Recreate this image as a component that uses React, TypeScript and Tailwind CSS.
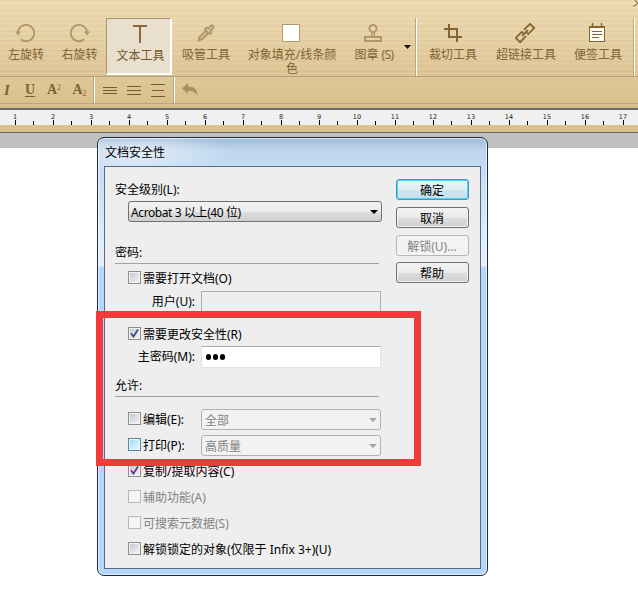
import React from 'react';
import clsx from 'clsx';
import { Pipette } from 'lucide-react';

const ICON = '#b0966a';
const DARK = '#84652f';

const RotateIcon = ({ flip }: { flip?: boolean }) => (
    <svg
        width="20"
        height="20"
        viewBox="0 0 20 20"
        fill="none"
        stroke={ICON}
        strokeWidth="1.8"
        className={clsx(flip ? '-scale-x-100' : 'mr-[3px]')}
    >
        <path d="M5.7 16.3A8.2 8.2 0 1 0 2.8 10" />
        <path d="M0 8.5h6L3 12.500z" fill={ICON} stroke="none" />
    </svg>
);

const TextIcon = () => (
    <svg width="20" height="20" viewBox="0 0 20 20" fill="#86683a" className="mr-[2px]">
        <rect x="3" y="1" width="14" height="2" />
        <rect x="9" y="1" width="2" height="18" />
    </svg>
);

const FillIcon = () => (
    <div className="mr-[2px] h-[18px] w-[18px] border border-[#b39a6a] bg-white" />
);

const StampIcon = () => (
    <svg
        width="20"
        height="20"
        viewBox="0 0 20 20"
        fill="none"
        stroke={ICON}
        strokeWidth="2"
        className="mr-[2px]"
    >
        <circle cx="10" cy="5.500" r="3.600" />
        <path d="M8.700 9v4.500M11.300 9v4.500" strokeWidth="1.500" />
        <rect x="2" y="14" width="16" height="4" />
    </svg>
);

const CropIcon = () => (
    <svg
        width="20"
        height="20"
        viewBox="0 0 20 20"
        fill="none"
        stroke={DARK}
        strokeWidth="2"
    >
        <path d="M6 1v13h13M1 6h13v13" />
    </svg>
);

const LinkIcon = () => (
    <svg
        width="20"
        height="20"
        viewBox="0 0 20 20"
        fill="none"
        stroke={DARK}
        strokeWidth="1.800"
        className="mr-[2px]"
    >
        <g transform="rotate(-45 10 10)">
            <path d="M8.500 13H0V7h8.500v2M11.500 7H20v6h-8.500v-2M6 10h8" />
        </g>
    </svg>
);

const NoteIcon = () => (
    <svg width="18" height="20" viewBox="0 0 18 20" fill="none" stroke={DARK} className="mr-[2px]">
        <rect x="1.500" y="3.500" width="15" height="15" fill="#fffdf6" />
        <path d="M1 4h16" strokeWidth="2" />
        <path d="M4.500 0v5M13.500 0v5" strokeWidth="1.500" />
        <path d="M4 8.500h10M4 11.500h10M4 14.500h7" />
    </svg>
);

interface ToolProps {
    icon: React.ReactNode;
    label: React.ReactNode;
    className: string;
}

const Tool = ({ icon, label, className }: ToolProps) => (
    <div className={clsx('flex shrink-0 flex-col items-center', className)}>
        <div className="flex h-5 items-center">{icon}</div>
        <div className="mt-[5px] text-center leading-[14px] whitespace-nowrap">
            {label}
        </div>
    </div>
);

const Separator = () => (
    <div className="w-[2px] shrink-0 self-stretch border-l border-[#bda77c] bg-white" />
);

const Lines = ({ gap, inset = 0 }: { gap: number; inset?: number }) => (
    <svg
        width="14"
        height="16"
        viewBox="0 0 14 16"
        stroke="#6f5b35"
        strokeWidth="1"
    >
        <path
            d={`M0 ${8.5 - gap}h14M${inset} 8.5H${14 - inset}M0 ${8.5 + gap}h14`}
        />
    </svg>
);

const Toolbar = () => (
    <div className="relative flex h-[77px] items-start overflow-hidden border-b border-[#b5a07c] bg-[repeating-linear-gradient(180deg,rgba(160,120,50,0.06)_0_2px,transparent_2px_5px),linear-gradient(180deg,#efddb8,#dec697)] pt-[18px] text-[#806331]">
        <Tool className="w-[52px] pt-[5px]" icon={<RotateIcon />} label="左旋转" />
        <Tool className="w-[54px] pt-[5px] pl-px" icon={<RotateIcon flip />} label="右旋转" />
        <Tool
            className="h-[57px] w-[66px] border border-r-2 border-b-2 border-[#a9946c] border-r-white border-b-white bg-[#e8dfcd] pt-[5px] pl-[4px] text-[#75582b]"
            icon={<TextIcon />}
            label="文本工具"
        />
        <Tool
            className="w-[68px] pt-[5px]"
            icon={<Pipette size={18} color={ICON} strokeWidth={2.6} />}
            label="吸管工具"
        />
        <Tool
            className="w-[104px] pt-[5px]"
            icon={<FillIcon />}
            label={
                <>
                    <div>对象填充/线条颜</div>
                    <div>色</div>
                </>
            }
        />
        <Tool
            className="w-[60px] pt-[5px]"
            icon={<StampIcon />}
            label={
                <>
                    图章 <span className="tracking-[-0.6px]">(S)</span>
                </>
            }
        />
        <svg width="7" height="4" viewBox="0 0 7 4" className="mt-[27px] mr-1 shrink-0">
            <path d="M0 0h7L3.500 4z" fill="#111" />
        </svg>
        <Separator />
        <Tool className="w-[72px] pt-[5px]" icon={<CropIcon />} label="裁切工具" />
        <Tool className="w-[74px] pt-[5px]" icon={<LinkIcon />} label="超链接工具" />
        <Tool className="w-[70px] pt-[5px]" icon={<NoteIcon />} label="便签工具" />
        <Separator />
        {/* next toolbar caption, cut off by the window edge */}
        <svg
            width="5"
            height="7"
            viewBox="0 0 5 7"
            stroke="#75582b"
            fill="none"
            className="absolute top-0 right-0"
        >
            <path d="M2 0 5 4M5 2.500C4 4.500 2.500 5.500.5 6" />
        </svg>
    </div>
);

const FormatBar = () => (
    <div className="flex h-[31px] items-start bg-[linear-gradient(180deg,#dfc898,#d8bf8a)] text-[#7a6238]">
        <div className="flex h-[27px] w-full items-center border-b border-[#bca18b] font-['Liberation_Serif',serif] text-[14px] leading-none">
            <span className="w-[18px] pl-[4px] text-[15px] font-bold italic">I</span>
            <span className="w-6 text-center text-[14px] font-bold underline underline-offset-2">
                U
            </span>
            <span className="w-6 text-center font-bold">
                A<sup className="text-[8px] font-normal text-[#b5502e]">2</sup>
            </span>
            <span className="w-[27px] text-center font-bold">
                A<sub className="text-[8px] font-normal text-[#b5502e]">2</sub>
            </span>
            <Separator />
            <div className="flex w-[78px] items-center gap-[10px] pl-2">
                <Lines gap={3} />
                <Lines gap={4} />
                <Lines gap={6} inset={1} />
            </div>
            <Separator />
            <svg width="16" height="14" viewBox="0 0 16 14" className="ml-[7px]">
                <path
                    d="M0 5.500 6 0v3.500c6 0 9.500 2.500 9.500 9.500-1.500-3.500-4-5-9.500-5V11z"
                    fill="#ab8f5c"
                />
            </svg>
        </div>
    </div>
);

const Ruler = () => (
    <div className="flex h-[17px] overflow-hidden border-t-2 border-[#6d6b68] bg-[#f0f0f0] font-['DejaVu_Sans',sans-serif] text-[6.5px] text-[#222]">
        <div className="-ml-1 flex shrink-0">
            {Array.from({ length: 17 }, (_, i) => (
                <div key={i} className="flex w-[38px] shrink-0 flex-col items-center">
                    <div className="h-[10px] leading-[14px]">{i + 1}</div>
                    <div className="flex w-full items-end pl-[18.500px]">
                        <i className="h-[5px] w-px bg-black" />
                        <i className="ml-[18px] h-1 w-px shrink-0 bg-black" />
                    </div>
                </div>
            ))}
        </div>
    </div>
);

interface CheckProps {
    label: string;
    checked?: boolean;
    disabled?: boolean;
    hot?: boolean;
    className?: string;
}

const Check = ({ label, checked, disabled, hot, className }: CheckProps) => (
    <div
        className={clsx(
            'ml-[13px] flex h-5 items-center gap-[2px] whitespace-nowrap',
            disabled && 'text-[#838383]',
            className,
        )}
    >
        <div
            className={clsx(
                'mb-px flex h-[13px] w-[13px] shrink-0 items-center justify-center border p-px',
                disabled ? 'border-[#b8b8b8] bg-[#f5f5f5]' : 'bg-[#f4f4f4]',
                !disabled && (hot ? 'border-[#4c87ad]' : 'border-[#8b8d8f]'),
            )}
        >
            {!disabled && (
                <div
                    className={clsx(
                        'flex h-[9px] w-[9px] items-center justify-center bg-linear-to-br',
                        hot ? 'from-[#a5dcf8] to-[#e9f8ff]' : 'from-[#c5c9cf] to-[#f3f3f3]',
                    )}
                >
                    {checked && (
                        <svg width="9" height="9" viewBox="0 0 9 9" fill="none" stroke="#3b4d91" strokeWidth="1.800">
                            <path d="M1 4.200 3.500 7.500 8 .6" />
                        </svg>
                    )}
                </div>
            )}
        </div>
        <span className="pt-[2px]">{label}</span>
    </div>
);

const Caret = ({ className }: { className: string }) => (
    <svg width="8" height="4" viewBox="0 0 8 4" className={className}>
        <path d="M0 0h8L4 4z" />
    </svg>
);

const DisabledSelect = ({ value }: { value: string }) => (
    <div className="flex h-[21px] w-[180px] items-center justify-between rounded-[3px] border border-[#adb2b5] bg-[#f2f2f2] pr-[3px] pl-[3px] text-[#838383]">
        <span className="pt-[2px]">{value}</span>
        <Caret className="fill-[#a3a3a3]" />
    </div>
);

const DialogButton = ({ label, variant }: { label: string; variant?: 'primary' | 'disabled' }) => (
    <div
        className={clsx(
            'flex h-[21px] w-[73px] items-center justify-center rounded-[3px] border',
            variant === 'primary' &&
                'border-[#3c9cbf] bg-[linear-gradient(180deg,#eaf4f8,#dfeef5_50%,#d0e5ee_55%,#c4e0ec)] shadow-[inset_0_0_0_1px_#4fd3f5]',
            variant === 'disabled' && 'border-[#b4b8ba] bg-[#f3f3f3] text-[#838383]',
            !variant &&
                'border-[#707070] bg-[linear-gradient(180deg,#f2f2f2,#ebebeb_50%,#dddddd_55%,#cfcfcf)] shadow-[inset_0_0_0_1px_#f4f4f4]',
        )}
    >
        <span className="pt-[2px] pr-px">{label}</span>
    </div>
);

const SecurityDialog = () => (
    <div className="absolute top-[137px] left-[97px] flex h-[439px] w-[391px] flex-col rounded-[7px] border border-[#1e2c3c] bg-[radial-gradient(ellipse_90px_24px_at_40px_14px,rgba(255,255,255,0.6),transparent),linear-gradient(180deg,#9dbad6_0,#bdd5ec_12px,#c3dcf6_30px,#e0effc_110px,#e4f1fd_128px,#b4d7fb_129px)] px-[6px] pb-[6px] shadow-[inset_0_0_0_1px_rgba(255,255,255,0.6)]">
        <div className="h-7 pl-px leading-[29px]">文档安全性</div>
        <div className="flex flex-1 justify-between border border-[#5a6b80] bg-[#eeeeee] pt-3 pr-[11px] pl-[10px]">
            <div className="flex w-[267px] flex-col">
                <div className="h-5 leading-[22px]">安全级别(L):</div>
                <div className="mt-[2px] ml-[13px] flex h-[21px] w-[254px] items-center justify-between rounded-[3px] border border-[#707070] bg-[linear-gradient(180deg,#f2f2f2,#ebebeb_50%,#dddddd_55%,#cfcfcf)] pr-[3px] pl-[2px]">
                    <span className="pt-[2px] tracking-[-0.4px]">Acrobat 3 以上(40 位)</span>
                    <Caret className="fill-black" />
                </div>

                {/* passwords */}
                <div className="mt-5 h-5 leading-[22px]">密码:</div>
                <div className="mt-px h-px w-[264px] bg-[#a0a0a0]" />
                <Check className="mt-1" label="需要打开文档(O)" />
                <div className="mt-[3px] flex h-[21px] items-center">
                    <span className="w-[86px] pr-[6px] text-right">用户(U):</span>
                    <div className="h-[21px] w-[180px] border border-[#abadb3]" />
                </div>
                <Check className="mt-3" label="需要更改安全性(R)" checked />
                <div className="mt-[2px] flex h-[22px] items-center">
                    <span className="w-[86px] pr-[6px] text-right">主密码(M):</span>
                    <div className="flex h-[22px] w-[180px] items-center gap-[1.500px] border border-[#e2e3ea] border-t-[#abadb3] bg-white pl-[3.500px]">
                        {[0, 1, 2].map((i) => (
                            <i key={i} className="h-[5.500px] w-[5.500px] rounded-full bg-black" />
                        ))}
                    </div>
                </div>

                {/* permissions */}
                <div className="mt-[7px] h-5 leading-[22px]">允许:</div>
                <div className="mt-px h-px w-[264px] bg-[#a0a0a0]" />
                <div className="mt-3 flex h-[21px] items-start">
                    <Check className="w-[73px]" label="编辑(E):" />
                    <DisabledSelect value="全部" />
                </div>
                <div className="mt-[5px] flex h-[21px] items-start">
                    <Check className="w-[73px]" label="打印(P):" hot />
                    <DisabledSelect value="高质量" />
                </div>
                <Check className="mt-[5px]" label="复制/提取内容(C)" checked />
                <Check className="mt-[6px]" label="辅助功能(A)" disabled />
                <Check className="mt-[6px]" label="可搜索元数据(S)" disabled />
                <Check className="mt-[6px]" label="解锁锁定的对象(仅限于 Infix 3+)(U)" />
            </div>
            <div className="flex flex-col gap-[7px]">
                <DialogButton label="确定" variant="primary" />
                <DialogButton label="取消" />
                <DialogButton label="解锁(U)..." variant="disabled" />
                <div className="-mt-px">
                    <DialogButton label="帮助" />
                </div>
            </div>
        </div>
    </div>
);

const App = () => (
    <div className="relative h-[606px] w-[638px] overflow-hidden bg-white font-['Noto_Sans','Noto_Sans_CJK_SC',sans-serif] text-[12px] text-black">
        <Toolbar />
        <FormatBar />
        <Ruler />
        <div className="h-2 border-b border-[#6b6a60] bg-[#d9c08c]" />
        <div className="h-[15px] bg-[#c0c0be]" />
        <SecurityDialog />
        {/* highlight frame */}
        <div className="absolute top-[311px] left-[96px] h-[155px] w-[325px] border-[7px] border-[#f23a3a]" />
    </div>
);

export default App;
